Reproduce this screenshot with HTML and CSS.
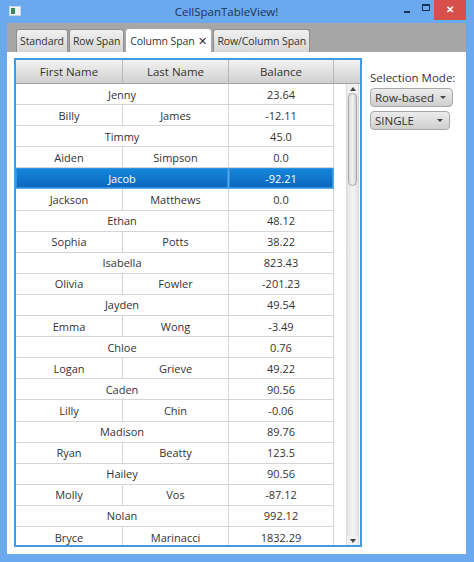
FILE: index.html
```html
<!DOCTYPE html>
<html lang="en">

<head>
    <meta charset="UTF-8">
    <title>CellSpanTableView!</title>
    <link rel="stylesheet" href="styles.css">
</head>

<body>
    <div class="window">
        <div class="titlebar">
            <div class="appicon"><span></span></div>
            <div class="title">CellSpanTableView!</div>
            <div class="controls">
                <span class="min"></span>
                <span class="max"></span>
                <span class="close">&#x2715;</span>
            </div>
        </div>

        <div class="client">
            <div class="tabbar">
                <div class="tab">Standard</div>
                <div class="tab">Row Span</div>
                <div class="tab active">Column Span <span class="x">&#x2715;</span></div>
                <div class="tab">Row/Column Span</div>
            </div>

            <div class="content">
                <div class="table">
                    <div class="thead">
                        <div class="th">First Name</div>
                        <div class="th">Last Name</div>
                        <div class="th">Balance</div>
                        <div class="th filler"></div>
                    </div>
                    <div class="tbody">
                        <div class="rows">
                            <div class="td span">Jenny</div><div class="td">23.64</div>
                            <div class="td">Billy</div><div class="td">James</div><div class="td">-12.11</div>
                            <div class="td span">Timmy</div><div class="td">45.0</div>
                            <div class="td">Aiden</div><div class="td">Simpson</div><div class="td">0.0</div>
                            <div class="td span sel">Jacob</div><div class="td sel">-92.21</div>
                            <div class="td">Jackson</div><div class="td">Matthews</div><div class="td">0.0</div>
                            <div class="td span">Ethan</div><div class="td">48.12</div>
                            <div class="td">Sophia</div><div class="td">Potts</div><div class="td">38.22</div>
                            <div class="td span">Isabella</div><div class="td">823.43</div>
                            <div class="td">Olivia</div><div class="td">Fowler</div><div class="td">-201.23</div>
                            <div class="td span">Jayden</div><div class="td">49.54</div>
                            <div class="td">Emma</div><div class="td">Wong</div><div class="td">-3.49</div>
                            <div class="td span">Chloe</div><div class="td">0.76</div>
                            <div class="td">Logan</div><div class="td">Grieve</div><div class="td">49.22</div>
                            <div class="td span">Caden</div><div class="td">90.56</div>
                            <div class="td">Lilly</div><div class="td">Chin</div><div class="td">-0.06</div>
                            <div class="td span">Madison</div><div class="td">89.76</div>
                            <div class="td">Ryan</div><div class="td">Beatty</div><div class="td">123.5</div>
                            <div class="td span">Hailey</div><div class="td">90.56</div>
                            <div class="td">Molly</div><div class="td">Vos</div><div class="td">-87.12</div>
                            <div class="td span">Nolan</div><div class="td">992.12</div>
                            <div class="td">Bryce</div><div class="td">Marinacci</div><div class="td">1832.29</div>
                        </div>
                        <div class="vscroll">
                            <div class="arrow up"></div>
                            <div class="track">
                                <div class="thumb"></div>
                            </div>
                            <div class="arrow down"></div>
                        </div>
                    </div>
                </div>

                <div class="side">
                    <div class="label">Selection Mode:</div>
                    <div class="combo wide">Row-based <span class="caret"></span></div>
                    <div class="combo">SINGLE <span class="caret"></span></div>
                </div>
            </div>
        </div>
    </div>
</body>

</html>
```

FILE: styles.css
```css
* {
    box-sizing: border-box;
}

body {
    margin: 0;
    width: 474px;
    height: 562px;
    overflow: hidden;
    background: #6aa9ee;
    font-family: "Open Sans", "Liberation Sans", sans-serif;
    font-size: 11px;
    color: #333;
}

.window {
    height: 562px;
    display: flex;
    flex-direction: column;
}

/* title bar */
.titlebar {
    height: 23px;
    display: flex;
    align-items: center;
    padding-left: 9px;
}

.appicon {
    width: 12px;
    height: 10px;
    margin-top: -2px;
    background: #f2f2f2;
    border: 1px solid #c8d8e8;
    padding: 1px;
}

.appicon span {
    display: block;
    width: 4px;
    height: 6px;
    background: #3c8a5a;
}

.title {
    flex: 1;
    text-align: center;
    font-size: 11.5px;
    color: #1d3350;
    padding-left: 28px;
    margin-top: -1px;
}

.controls {
    display: flex;
    align-items: flex-start;
    align-self: flex-start;
    margin-right: 8px;
}

.min {
    width: 6px;
    height: 2px;
    background: #1d3350;
    margin: 11px 12px 0 0;
}

.max {
    width: 8px;
    height: 7px;
    border: 1px solid #1d3350;
    border-top-width: 2px;
    margin: 4px 4px 0 0;
}

.close {
    width: 32px;
    height: 20px;
    background: #d64f48;
    color: #fff;
    font-size: 10px;
    font-weight: bold;
    text-align: center;
    line-height: 19px;
}

/* client area */
.client {
    flex: 1;
    margin: 0 8px 8px 7px;
    background: #fff;
    display: flex;
    flex-direction: column;
}

.tabbar {
    height: 29px;
    background: #a6a6a6;
    display: flex;
    align-items: flex-end;
    padding-left: 9px;
    gap: 1px;
}

.tab {
    height: 23px;
    padding: 0 3px;
    display: flex;
    align-items: center;
    font-size: 10.5px;
    letter-spacing: -0.1px;
    color: #333;
    background: linear-gradient(#f0f0f0, #d6d6d6);
    border: 1px solid #8f8f8f;
    border-bottom: none;
    border-radius: 3px 3px 0 0;
}

.tab.active {
    background: #fff;
    border-color: #fff;
    margin: 0 1px;
    padding-right: 4px;
}

.tab .x {
    font-size: 10.5px;
    margin-left: 3px;
}

.content {
    flex: 1;
    display: flex;
    padding: 6px 0 0 7px;
    gap: 8px;
}

/* table */
.table {
    width: 348px;
    height: 489px;
    border: 2px solid #3d9be6;
    display: flex;
    flex-direction: column;
    overflow: hidden;
}

.thead {
    display: grid;
    grid-template-columns: 107px 106px 105px 1fr;
    height: 24px;
    flex-shrink: 0;
}

.th {
    display: flex;
    align-items: center;
    justify-content: center;
    font-size: 11.5px;
    color: #333;
    background: linear-gradient(#f3f3f3, #cfcfcf);
    border-right: 1px solid #b8b8b8;
    border-bottom: 1px solid #a4a4a4;
}

.th.filler {
    border-right: none;
}

.tbody {
    flex: 1;
    display: flex;
    overflow: hidden;
}

.rows {
    width: 318px;
    display: grid;
    grid-template-columns: 107px 106px 105px;
    grid-auto-rows: 21.1px;
    flex-shrink: 0;
}

.td {
    display: flex;
    align-items: center;
    justify-content: center;
    line-height: 13px;
    border-right: 1px solid #d5d5d5;
    border-bottom: 1px solid #d5d5d5;
    color: #333;
    white-space: nowrap;
}

.td.span {
    grid-column: span 2;
}

.td.sel {
    color: #fff;
    background: linear-gradient(#1587dc, #0a66bd);
    border-color: #5aa9e6;
    box-shadow: inset 0 0 0 1px #2e92de;
}

.vscroll {
    margin-left: auto;
    width: 13px;
    margin-right: 1px;
    display: flex;
    flex-direction: column;
    background: #f1f1f1;
    border-left: 1px solid #dcdcdc;
    border-right: 1px solid #dcdcdc;
}

.arrow {
    height: 9px;
    flex-shrink: 0;
    display: flex;
    align-items: center;
    justify-content: center;
}

.arrow::after {
    content: "";
    border-left: 3px solid transparent;
    border-right: 3px solid transparent;
}

.arrow.up::after {
    border-bottom: 4px solid #444;
}

.arrow.down::after {
    border-top: 4px solid #444;
}

.track {
    flex: 1;
    padding: 0 1px;
    background: linear-gradient(90deg, #e4e4e4, #f4f4f4, #e4e4e4);
}

.thumb {
    height: 93px;
    border-radius: 5px;
    border: 1px solid #a8a8a8;
    background: linear-gradient(90deg, #dcdcdc, #f2f2f2, #cfcfcf);
}

/* side controls */
.side {
    padding-top: 12px;
    display: flex;
    flex-direction: column;
    align-items: flex-start;
}

.label {
    font-size: 11.5px;
    color: #333;
    margin-bottom: 3px;
}

.combo {
    width: 80px;
    height: 19px;
    margin-bottom: 4px;
    padding: 0 6px 0 4px;
    display: flex;
    align-items: center;
    justify-content: space-between;
    font-size: 11.5px;
    color: #333;
    background: linear-gradient(#ececec, #cfcfcf);
    border: 1px solid #a8a8a8;
    border-radius: 4px;
}

.combo.wide {
    width: 83px;
}

.caret {
    border-left: 3px solid transparent;
    border-right: 3px solid transparent;
    border-top: 3px solid #444;
}
```
